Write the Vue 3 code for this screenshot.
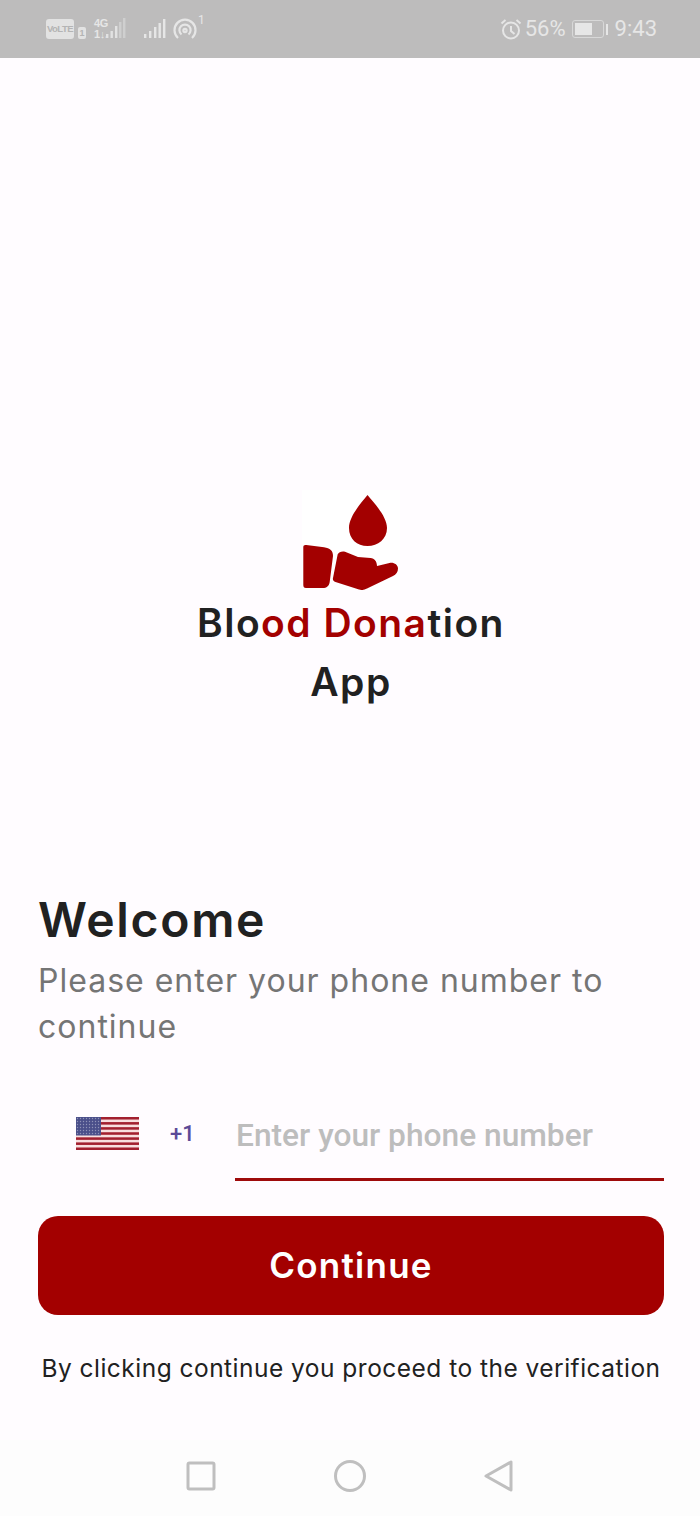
<script setup>
const stripes = [0, 2, 4, 6, 8, 10, 12]
</script>

<template>
  <div class="screen">
    <header class="status">
      <div class="status-left">
        <span class="volte">VoLTE</span>
        <span class="sim">1</span>
        <span class="net"><i>4G</i><i>1↓.</i></span>
        <svg class="bars" width="26" height="22" viewBox="0 0 26 22">
          <g fill="#e2e2e2">
            <rect x="3" y="16" width="2.400" height="4" /><rect x="7.500" y="13" width="2.400" height="7" /><rect x="12" y="8" width="2.400" height="12" />
          </g>
          <g fill="#cfcfcf"><rect x="16" y="4" width="2.400" height="16" /><rect x="20" y="0" width="2.400" height="20" /></g>
        </svg>
        <svg class="bars2" width="24" height="22" viewBox="0 0 24 22">
          <g fill="#e6e6e6">
            <rect x="1" y="16" width="2.400" height="4" /><rect x="6" y="13" width="2.400" height="7" /><rect x="11" y="9" width="2.400" height="11" /><rect x="15.500" y="5" width="2.400" height="15" /><rect x="20" y="1" width="2.400" height="19" />
          </g>
        </svg>
        <svg class="hotspot" width="24" height="22" viewBox="0 0 24 22" fill="none" stroke="#e6e6e6" stroke-width="2.200">
          <path d="M5 20a10.500 10.500 0 1 1 14 0" />
          <path d="M8.500 16.500a5.600 5.600 0 1 1 7 0" />
          <circle cx="12" cy="12.500" r="1.600" />
        </svg>
        <sup class="hot-count">1</sup>
      </div>
      <div class="status-right">
        <svg width="22" height="22" viewBox="0 0 22 22" fill="none" stroke="#e6e6e6" stroke-width="2">
          <circle cx="11" cy="12.500" r="8" />
          <path d="M11 8v5l3.500 3M1.500 5.500 5.500 2M20.500 5.500 16.500 2" />
        </svg>
        <span class="pct">56%</span>
        <span class="battery"><span class="level"></span></span>
        <span class="nub"></span>
        <span class="time">9:43</span>
      </div>
    </header>

    <main class="main">
      <section class="brand">
        <svg class="logo" width="98" height="100" viewBox="0 0 98 100">
          <rect width="98" height="100" fill="#fff" />
          <g fill="#a30000">
            <path d="M65.500 5C60 12 47 26 47 38c0 11 8 18 18.500 18S85 49 85 38C85 26 71 12 65.500 5Z" />
            <path d="M1.300 57c0-1.500 1-2.300 3-2L22 57.200c6 .8 9 3.300 9 8.800l-3.300 26c-.7 4-3 6-7 6H4c-2 0-2.700-1-2.700-3Z" />
            <path d="M35.700 64.300c1-2 4-3.500 7.300-2.600L56 67l12.500 1c4 .3 6.500 3.500 6.500 8l12.500-3c4-1 8.500 1.500 8.500 5.500 0 3.500-2 6-5 7.500L65 98.500c-3 1.500-5 2-8 1L33.500 92c-2-.7-3-2-2.500-4Z" />
          </g>
        </svg>
        <h1 class="title">Blo<span class="red">od Dona</span>tion<br />App</h1>
      </section>

      <section class="intro">
        <h2 class="welcome">Welcome</h2>
        <p class="lead">Please enter your phone number to continue</p>
      </section>

      <div class="phone">
        <svg class="flag" width="63" height="33" viewBox="0 0 63 33">
          <defs>
            <pattern id="stars" width="3" height="3" patternUnits="userSpaceOnUse">
              <rect width="3" height="3" fill="#4a4f8a" />
              <circle cx="1.500" cy="1.500" r=".7" fill="#8f92b8" />
            </pattern>
          </defs>
          <rect width="63" height="33" fill="#f8dfdf" />
          <rect v-for="s in stripes" :key="s" width="63" height="2.540" :y="s * 2.54" fill="#a2202f" />
          <rect width="25" height="18.500" fill="url(#stars)" />
        </svg>
        <span class="code">+1</span>
        <div class="input">Enter your phone number</div>
      </div>

      <button class="continue" type="button">Continue</button>
      <p class="note">By clicking continue you proceed to the verification</p>
    </main>

    <nav class="navbar">
      <svg width="30" height="30" viewBox="0 0 30 30" fill="none" stroke="#bfbfbf" stroke-width="3" stroke-linejoin="round">
        <rect x="2" y="2" width="26" height="26" rx="1.500" />
      </svg>
      <svg width="32" height="32" viewBox="0 0 32 32" fill="none" stroke="#bfbfbf" stroke-width="3">
        <circle cx="16" cy="16" r="14.500" />
      </svg>
      <svg width="30" height="32" viewBox="0 0 30 32" fill="none" stroke="#bfbfbf" stroke-width="3" stroke-linejoin="round">
        <path d="M27 2v28L2 16Z" />
      </svg>
    </nav>
  </div>
</template>

<style>
html, body { margin: 0; padding: 0; background: #fffcff; }
</style>

<style scoped>
.screen {
  width: 700px;
  height: 1516px;
  display: flex;
  flex-direction: column;
  background: #fffcff;
  font-family: Inter, "Liberation Sans", sans-serif;
  overflow: hidden;
}
.status {
  flex: 0 0 58px;
  box-sizing: border-box;
  background: #bdbcbc;
  display: flex;
  justify-content: space-between;
  align-items: center;
  padding: 0 43px 0 46px;
  color: #e6e6e6;
}
.status-left, .status-right { display: flex; align-items: center; }
.volte {
  background: #e2e2e2;
  color: #b4b4b4;
  font: 700 9.500px/20px "Liberation Sans", sans-serif;
  letter-spacing: -.5px;
  width: 28px;
  height: 20px;
  text-align: center;
  border-radius: 3px;
  overflow: hidden;
}
.sim {
  margin-left: 4px;
  background: #e2e2e2;
  color: #b4b4b4;
  font: 700 9px/12px "Liberation Sans", sans-serif;
  width: 8px;
  height: 12px;
  margin-top: 8px;
  text-align: center;
  border-radius: 2px;
}
.net {
  margin-left: 8px;
  display: flex;
  flex-direction: column;
  font: 700 11px/11px "Liberation Sans", sans-serif;
  letter-spacing: -.3px;
}
.net i { font-style: normal; }
.bars { margin-left: -5px; }
.bars2 { margin-left: 14px; }
.hotspot { margin-left: 6px; }
.hot-count {
  font: 400 12px/14px Roboto, sans-serif;
  margin: -18px 0 0 1px;
}
.pct { font: 400 22px/24px Roboto, sans-serif; margin-left: 3px; }
.battery {
  margin-left: 6px;
  width: 32px;
  height: 18px;
  box-sizing: border-box;
  border: 1.500px solid #d8d8d8;
  border-radius: 3px;
  padding: 2px;
  display: flex;
}
.level { width: 17px; background: #e6e6e6; }
.nub { width: 2px; height: 11px; background: #e6e6e6; margin-left: 2px; }
.time { font: 400 22px/24px Roboto, sans-serif; margin-left: 7px; }

.main {
  flex: 1;
  display: flex;
  flex-direction: column;
  padding: 0 36px 0 38px;
  min-height: 0;
}
.brand {
  margin-top: 432px;
  display: flex;
  flex-direction: column;
  align-items: center;
}
.logo { display: block; }
.title {
  margin: 3px 0 0;
  font-size: 39px;
  letter-spacing: 1.470px;
  line-height: 59px;
  font-weight: 600;
  color: #212121;
  text-align: center;
}
.red { color: #a30000; }
.intro { margin-top: 179px; }
.welcome {
  margin: 0;
  font-size: 48px;
  letter-spacing: 1.700px;
  line-height: 60px;
  font-weight: 600;
  color: #212121;
}
.lead {
  margin: 8px 0 0;
  font-size: 32px;
  letter-spacing: 1px;
  line-height: 46px;
  color: #757575;
  font-weight: 400;
}
.phone {
  margin-top: 52px;
  display: flex;
  align-items: flex-start;
  height: 114px;
}
.flag { margin: 15px 0 0 38px; flex: none; }
.code {
  margin: 19px 0 0 31px;
  width: 65px;
  flex: none;
  font: 500 22px/26px Roboto, sans-serif;
  color: #5b4a97;
}
.input {
  flex: 1;
  height: 79px;
  box-sizing: border-box;
  padding-left: 1px;
  border-bottom: 3px solid #9e0b0b;
  font: 500 31.700px/68px Roboto, sans-serif;
  color: #bdbdbd;
}
.continue {
  height: 99px;
  border: 0;
  border-radius: 20px;
  background: #a30000;
  color: #fff;
  font: 600 35px/99px Inter, sans-serif;
  letter-spacing: 1.250px;
  padding: 0;
}
.note {
  margin: 36px 0 0;
  text-align: center;
  font-size: 24.500px;
  letter-spacing: .48px;
  line-height: 34px;
  color: #212121;
  white-space: nowrap;
}
.navbar {
  flex: 0 0 76px;
  background: #fdfdfd;
  display: grid;
  grid-template-columns: 30px 32px 30px;
  justify-content: center;
  justify-items: center;
  align-items: center;
  column-gap: 118px;
  padding-bottom: 4px;
  box-sizing: border-box;
}
</style>
